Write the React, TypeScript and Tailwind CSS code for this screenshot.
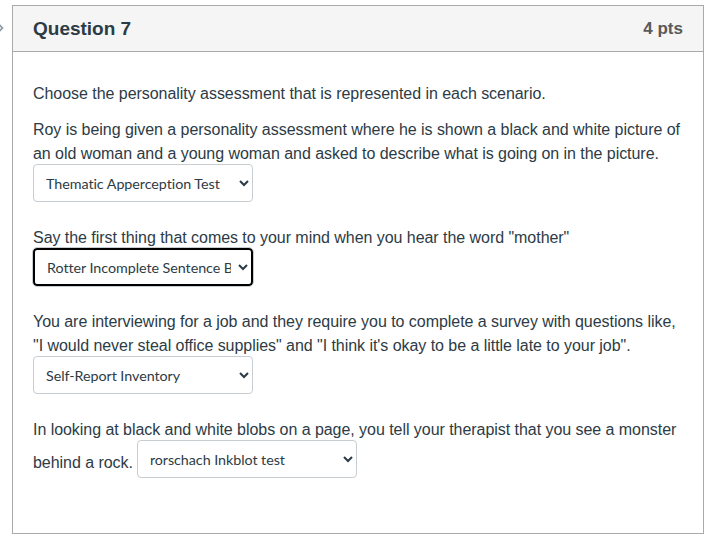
import React from "react";

const selCls =
  "h-[38px] w-[220px] rounded-[4px] border border-[#c7cdd1] bg-white pl-[8px] pr-[4px] text-[14.3px] text-[#2d3b45] font-['Lato','Noto_Sans',sans-serif]";

export default function App() {
  return (
    <div className="relative min-h-[546px] w-[726px] bg-white pl-[12px] pt-[5px] font-['Liberation_Sans',Arial,sans-serif] text-[#2d3b45]">
      <svg className="absolute left-[-4px] top-[22px]" width="9" height="12" viewBox="0 0 9 12">
        <path d="M2 1.5 L6.5 6 L2 10.5" fill="none" stroke="#8a9aa6" strokeWidth="1.6" />
      </svg>
      <div className="flex h-[529px] w-[692px] flex-col border border-[#aaaaaa]">
        <div className="flex h-[46px] items-center justify-between border-b border-[#aaaaaa] bg-[#f5f5f5] px-[20px] pt-[1px]">
          <span className="text-[19px] font-bold text-[#2d3b45]">Question 7</span>
          <span className="text-[17px] font-bold text-[#5a5a5a]">4 pts</span>
        </div>
        <div className="flex flex-col px-[20px] pt-[30px] text-[16px] leading-[24px] tracking-[-0.045px]">
          <p>Choose the personality assessment that is represented in each scenario.</p>
          <p className="mt-[12px]">
            Roy is being given a personality assessment where he is shown a black and white picture of an old woman and a young woman and asked to describe what is going on in the picture.
          </p>
          <select className={`${selCls} mt-[-2px]`} defaultValue="tat">
            <option value="tat">Thematic Apperception Test</option>
          </select>
          <p className="mt-[24px]">Say the first thing that comes to your mind when you hear the word "mother"</p>
          <select
            className={`${selCls} mt-[-2px] border-2 border-black outline outline-1 outline-[#c7cdd1]`}
            defaultValue="r"
          >
            <option value="r">Rotter Incomplete Sentence Blank</option>
          </select>
          <p className="mt-[24px]">
            You are interviewing for a job and they require you to complete a survey with questions like, "I would never steal office supplies" and "I think it's okay to be a little late to your job".
          </p>
          <select className={`${selCls} mt-[-2px]`} defaultValue="s">
            <option value="s">Self-Report Inventory</option>
          </select>
          <p className="mt-[24px]">
            In looking at black and white blobs on a page, you tell your therapist that you see a monster
          </p>
          <div className="mt-[-2px] flex items-end">
            <span className="pb-[3px]">behind a rock.</span>
            <select className={`${selCls} ml-[4px]`} defaultValue="ri">
              <option value="ri">rorschach Inkblot test</option>
            </select>
          </div>
        </div>
      </div>
    </div>
  );
}
